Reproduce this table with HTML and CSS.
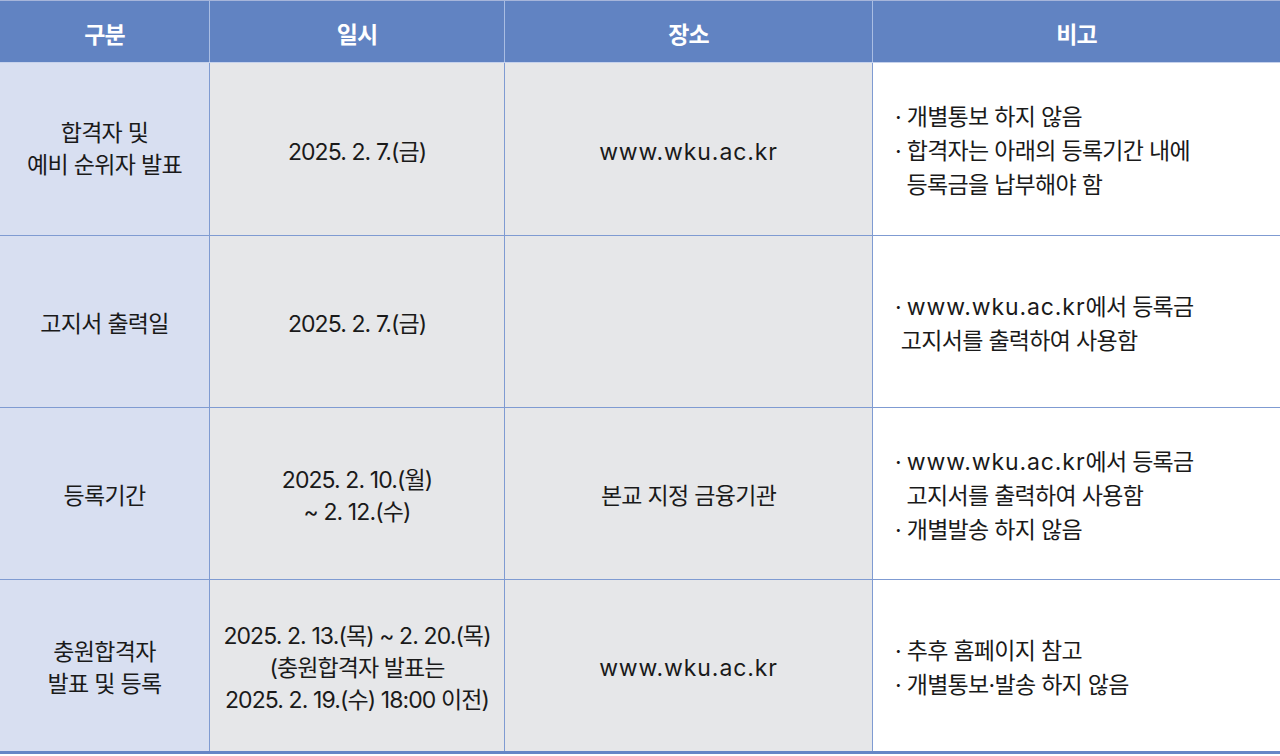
FILE: index.html
```html
<!DOCTYPE html>
<html lang="ko">
<head>
<meta charset="utf-8">
<link rel="stylesheet" href="styles.css">
</head>
<body>
<div class="table">
  <div class="row head">
    <div class="cell c1">구분</div>
    <div class="cell c2">일시</div>
    <div class="cell c3">장소</div>
    <div class="cell c4">비고</div>
  </div>
  <div class="row r1">
    <div class="cell c1 first"><div>합격자 및<br>예비 순위자 발표</div></div>
    <div class="cell c2"><div class="num">2025. 2. 7.(금)</div></div>
    <div class="cell c3"><div class="url">www.wku.ac.kr</div></div>
    <div class="cell c4 note"><div>· 개별통보 하지 않음<br>· 합격자는 아래의 등록기간 내에<br>&nbsp;&nbsp;등록금을 납부해야 함</div></div>
  </div>
  <div class="row">
    <div class="cell c1"><div>고지서 출력일</div></div>
    <div class="cell c2"><div class="num">2025. 2. 7.(금)</div></div>
    <div class="cell c3"></div>
    <div class="cell c4 note"><div>· <span class="url">www.wku.ac.kr</span>에서 등록금<br>&nbsp;고지서를 출력하여 사용함</div></div>
  </div>
  <div class="row">
    <div class="cell c1"><div>등록기간</div></div>
    <div class="cell c2"><div class="num">2025. 2. 10.(월)<br>~ 2. 12.(수)</div></div>
    <div class="cell c3"><div>본교 지정 금융기관</div></div>
    <div class="cell c4 note"><div>· <span class="url">www.wku.ac.kr</span>에서 등록금<br>&nbsp;&nbsp;고지서를 출력하여 사용함<br>· 개별발송 하지 않음</div></div>
  </div>
  <div class="row last">
    <div class="cell c1"><div>충원합격자<br>발표 및 등록</div></div>
    <div class="cell c2"><div class="num">2025. 2. 13.(목) ~ 2. 20.(목)<br>(충원합격자 발표는<br>2025. 2. 19.(수) 18:00 이전)</div></div>
    <div class="cell c3"><div class="url">www.wku.ac.kr</div></div>
    <div class="cell c4 note"><div>· 추후 홈페이지 참고<br>· 개별통보·발송 하지 않음</div></div>
  </div>
</div>
</body>
</html>
```

FILE: styles.css
```css
html, body {
  margin: 0;
  padding: 0;
  background: #ffffff;
}
body {
  font-family: "Inter", "Noto Sans CJK KR", sans-serif;
  color: #1a1a1a;
  width: 1280px;
  height: 756px;
  overflow: hidden;
}
.table {
  border-top: 1px solid #a6b5da;
  display: flex;
  flex-direction: column;
}
.row {
  display: grid;
  grid-template-columns: 210px 295px 368px 407px;
  height: 171px;
  border-bottom: 1px solid #7f9bd2;
}
.row.r1 {
  height: 172px;
}
.row.last {
  border-bottom: 3px solid #6686c6;
}
.row.head {
  height: 61px;
  background: #6183c2;
  border-bottom: 1px solid #c6d2ec;
}
.cell {
  display: flex;
  align-items: center;
  justify-content: center;
  text-align: center;
  font-size: 23px;
  line-height: 32px;
  letter-spacing: -0.7px;
  border-right: 1px solid #7f9bd2;
  box-sizing: border-box;
  padding-top: 5px;
}
.cell.first {
  padding-top: 0;
}
.num {
  letter-spacing: -0.9px;
}
.url {
  letter-spacing: 0.9px;
}
.cell.c4 {
  border-right: none;
}
.head .cell {
  font-family: "Noto Sans CJK KR", sans-serif;
  color: #ffffff;
  font-weight: 700;
  font-size: 23px;
  letter-spacing: -1px;
  border-right: 1px solid #a9bde3;
  padding-top: 2px;
}
.head .cell.c4 {
  border-right: none;
}
.c1 { background: #d8dff1; }
.c2, .c3 { background: #e6e7e9; }
.c4 { background: #ffffff; }
.head .c1, .head .c2, .head .c3, .head .c4 { background: transparent; }
.note {
  justify-content: flex-start;
  text-align: left;
  padding-left: 22px;
  line-height: 34px;
  padding-top: 4px;
}
```
